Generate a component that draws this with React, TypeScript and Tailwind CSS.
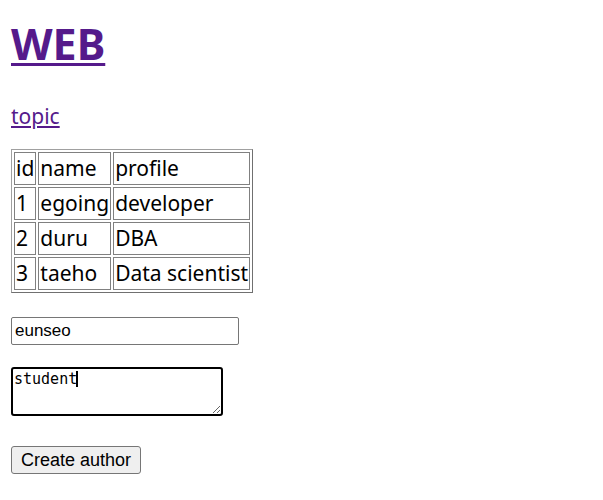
import React from 'react';

const rows = [
  { id: 'id', name: 'name', profile: 'profile' },
  { id: '1', name: 'egoing', profile: 'developer' },
  { id: '2', name: 'duru', profile: 'DBA' },
  { id: '3', name: 'taeho', profile: 'Data scientist' },
];

export default function App() {
  return (
    <div className="min-h-screen bg-white px-[11px] text-black font-['Noto_Sans',sans-serif]">
      {/* Title */}
      <h1 className="pt-[13px] text-[43px] font-bold leading-[62px]">
        <a href="#" className="text-[#551a8b] underline decoration-[3px] underline-offset-[3px]">
          WEB
        </a>
      </h1>

      {/* Nav */}
      <div className="mt-[26px] text-[21px] leading-[30px]">
        <a href="#" className="text-[#551a8b] underline">
          topic
        </a>
      </div>

      {/* Authors table */}
      <table className="mt-[18px] border-separate border-spacing-[2px] border border-t-[#a0a0a0] border-l-[#a0a0a0] border-r-[#707070] border-b-[#707070] text-[21px] leading-[27px]">
        <tbody>
          {rows.map((r) => (
            <tr key={r.id}>
              <td className="border border-[#808080] px-[1px] py-[2px]">{r.id}</td>
              <td className="border border-[#808080] px-[1px] py-[2px]">{r.name}</td>
              <td className="border border-[#808080] px-[1px] py-[2px]">{r.profile}</td>
            </tr>
          ))}
        </tbody>
      </table>

      {/* Form */}
      <form className="mt-[24px] flex flex-col items-start font-['Liberation_Sans',Arial,sans-serif]">
        <input
          type="text"
          defaultValue="eunseo"
          className="h-[28px] w-[228px] rounded-[2px] border border-[#767676] px-[3px] text-[17px] outline-none"
        />
        <div className="relative mt-[22px]">
          <textarea
            defaultValue="student"
            className="block h-[49px] w-[212px] resize rounded-[3px] border-2 border-black px-[1px] pt-[1px] font-['DejaVu_Sans_Mono',monospace] text-[15px] leading-[19px] outline-none"
          />
          <span className="absolute left-[65px] top-[4px] h-[16px] w-[2px] bg-black" />
        </div>
        <button
          type="button"
          className="mt-[30px] h-[28px] w-[130px] rounded-[3px] border border-[#767676] bg-[#efefef] text-[18px] leading-none"
        >
          Create author
        </button>
      </form>
    </div>
  );
}
